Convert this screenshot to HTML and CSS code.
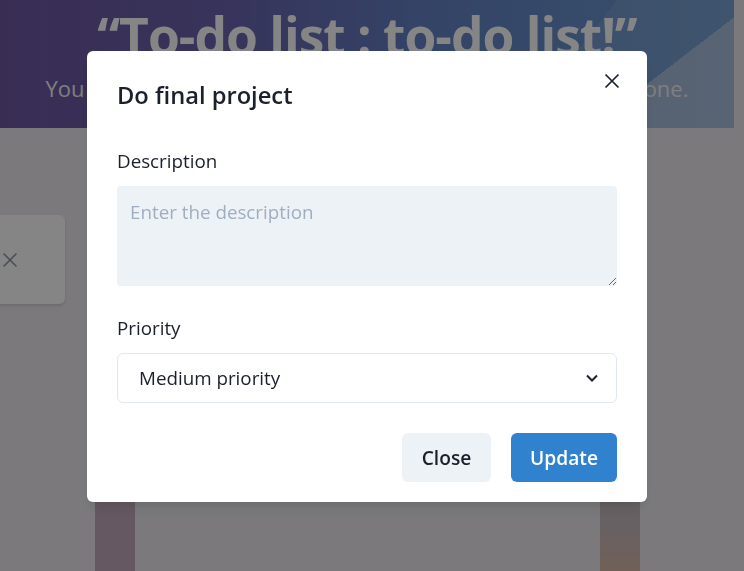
FILE: index.html
```html
<!DOCTYPE html>
<html lang="en">
<head>
<meta charset="utf-8">
<title>To-do list</title>
<link rel="stylesheet" href="styles.css">
</head>
<body>
<div class="page">
  <header class="hero">
    <h1 class="hero-title">“To-do list : to-do list!”</h1>
    <p class="hero-sub">You can add, edit and delete your tasks, then mark them done.</p>
  </header>
  <main class="board">
    <div class="task-card">
      <span class="task-text">Study for exam</span>
      <svg class="task-x" width="16" height="16" viewBox="0 0 16 16"><path d="M1.5 1.5L14.5 14.5M14.5 1.5L1.5 14.5" stroke="currentColor" stroke-width="1.6" fill="none"/></svg>
    </div>
    <div class="stand">
      <div class="leg leg-left"></div>
      <div class="leg leg-right"></div>
    </div>
  </main>
</div>

<div class="overlay">
  <section class="modal" role="dialog" aria-labelledby="m-title">
    <header class="modal-header">
      <h2 id="m-title" class="modal-title">Do final project</h2>
      <button class="modal-close" aria-label="Close">
        <svg width="16" height="16" viewBox="0 0 16 16"><path d="M1.5 1.5L14.5 14.5M14.5 1.5L1.5 14.5" stroke="#1a202c" stroke-width="1.7" fill="none"/></svg>
      </button>
    </header>
    <div class="modal-body">
      <label class="field-label" for="desc">Description</label>
      <textarea id="desc" class="field-textarea" placeholder="Enter the description"></textarea>
      <label class="field-label field-label-second" for="prio">Priority</label>
      <div class="select-wrap">
        <select id="prio" class="field-select">
          <option>Low priority</option>
          <option selected>Medium priority</option>
          <option>High priority</option>
        </select>
        <svg class="select-chevron" width="14" height="10" viewBox="0 0 14 10"><path d="M2 2.5L7 7.5L12 2.5" stroke="#1a202c" stroke-width="2" fill="none"/></svg>
      </div>
    </div>
    <footer class="modal-footer">
      <button class="btn btn-ghost">Close</button>
      <button class="btn btn-primary">Update</button>
    </footer>
  </section>
</div>
</body>
</html>
```

FILE: styles.css
```css
* { box-sizing: border-box; }
html, body { margin: 0; padding: 0; }
body {
  font-family: "Open Sans", "Noto Sans", "Liberation Sans", sans-serif;
  color: #1a202c;
  background: #ebe9ee;
  overflow: hidden;
  width: 744px;
  height: 571px;
}
.page { width: 734px; height: 571px; display: flex; flex-direction: column; }
.hero {
  height: 128px;
  text-align: center;
  color: #fff;
  background:
    linear-gradient(142.5deg, transparent 84%, rgba(185,200,225,0.75) 84%),
    linear-gradient(128deg, transparent 74%, rgba(160,185,220,0.22) 74%),
    linear-gradient(90deg, #6f57a2 0%, #6b63ad 30%, #6482c6 58%, #6e9ccf 100%);
  padding-top: 3px;
}
.hero-title {
  margin: 0;
  font-size: 51.5px;
  line-height: 64px;
  font-weight: 700;
  letter-spacing: -1px;
}
.hero-sub {
  margin: 6px 0 0;
  font-size: 22px;
  line-height: 30px;
  color: #f2f2f2;
}
.board { flex: 1; display: flex; flex-direction: column; padding-top: 87px; }
.task-card {
  width: 110px;
  height: 89px;
  margin-left: -45px;
  background: #fff;
  border-radius: 6px;
  box-shadow: 0 2px 3px rgba(0,0,0,0.12);
  display: flex;
  align-items: center;
  justify-content: flex-end;
  padding-right: 47px;
  color: #8e96a6;
}
.task-text { display: none; }
.stand { flex: 1; display: flex; justify-content: space-between; padding: 0 94px 0 95px; margin-top: 110px; }
.leg { width: 40px; }
.leg-left { background: #c3aabd; }
.leg-right { background: linear-gradient(180deg, #c6bbbf 70%, #d8b8a8 100%); }

.overlay {
  position: fixed;
  top: 0;
  left: 0;
  bottom: 0;
  right: 10px;
  background: rgba(0,0,0,0.48);
  display: flex;
  justify-content: center;
  align-items: flex-start;
  padding-top: 51px;
}
.overlay::after {
  content: "";
  position: fixed;
  top: 0;
  right: 0;
  bottom: 0;
  width: 10px;
  background: rgba(0,0,0,0.48);
}
.modal {
  position: relative;
  width: 560px;
  background: #fff;
  border-radius: 6px;
  box-shadow: 0 10px 15px -3px rgba(0,0,0,0.1), 0 4px 6px -2px rgba(0,0,0,0.05);
}
.modal-header { padding: 28px 30px 0; }
.modal-title {
  margin: 0;
  font-size: 23.7px;
  line-height: 32px;
  font-weight: 600;
  color: #1a202c;
}
.modal-close {
  position: absolute;
  top: 14px;
  right: 19px;
  width: 32px;
  height: 32px;
  border: 0;
  background: transparent;
  display: flex;
  align-items: center;
  justify-content: center;
  padding: 0;
  border-radius: 6px;
}
.modal-body { padding: 37px 30px 0; display: flex; flex-direction: column; }
.field-label {
  font-size: 18.8px;
  line-height: 27px;
  margin-bottom: 11px;
  color: #1a202c;
}
.field-label-second { margin-top: 29px; }
.field-textarea {
  display: block;
  width: 100%;
  height: 100px;
  border: 0;
  border-radius: 4px;
  background: #edf2f7;
  padding: 13px 13px;
  font-family: inherit;
  font-size: 18.8px;
  line-height: 27px;
  color: #1a202c;
  resize: vertical;
  outline: none;
}
.field-textarea::placeholder { color: #a0aec0; }
.select-wrap { position: relative; }
.field-select {
  display: block;
  width: 100%;
  height: 50px;
  appearance: none;
  -webkit-appearance: none;
  border: 1px solid #e2e8f0;
  border-radius: 6px;
  background: #fff;
  padding: 0 40px 0 21px;
  font-family: inherit;
  font-size: 18.8px;
  color: #1a202c;
  outline: none;
}
.select-chevron { position: absolute; right: 18px; top: 20px; pointer-events: none; }
.modal-footer {
  display: flex;
  justify-content: flex-end;
  gap: 20px;
  padding: 30px 30px 20px;
}
.btn {
  height: 49px;
  border: 0;
  border-radius: 6px;
  font-family: inherit;
  font-size: 19.2px;
  font-weight: 600;
  padding: 0;
}
.btn-ghost { background: #edf2f7; color: #1a202c; width: 89px; }
.btn-primary { background: #3182ce; color: #fff; width: 106px; }
```
